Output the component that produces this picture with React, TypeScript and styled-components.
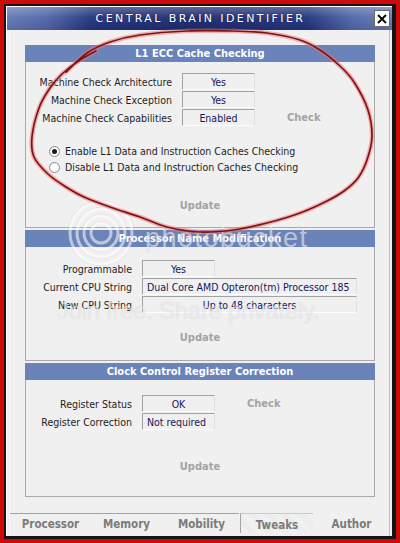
import React from "react";
import styled, { createGlobalStyle } from "styled-components";

const Global = createGlobalStyle`
  html, body { margin: 0; padding: 0; background: #cf0a0a; }
  body { font-family: "DejaVu Sans Condensed", "DejaVu Sans", sans-serif; font-stretch: condensed; }
  * { box-sizing: border-box; }
`;

const Frame = styled.div`
  width: 400px;
  height: 543px;
  background: #cf0a0a;
  padding: 4px;
  position: relative;
  overflow: hidden;
`;

const Shadow = styled.div`
  height: 100%;
  background: #141414;
  padding: 2px 4px 3px 2px;
`;

const Window = styled.div`
  height: 100%;
  display: flex;
  flex-direction: column;
  background: #f0f0f0;
  border-top: 1px solid #ffffff;
  border-left: 1px solid #ffffff;
`;

const TitleBar = styled.div`
  height: 23px;
  display: grid;
  grid-template-columns: 1fr auto 1fr;
  align-items: center;
  background:
    linear-gradient(180deg, rgba(255,255,255,0.28) 0%, rgba(255,255,255,0.05) 45%, rgba(0,0,0,0.08) 100%),
    linear-gradient(90deg, #6276b4 0%, #5165a8 10%, #22337b 22%, #1b2a70 50%, #22337b 78%, #5166a8 90%, #6378b6 100%);
`;

const TitleText = styled.div`
  grid-column: 2;
  color: #ffffff;
  font-family: "DejaVu Sans", sans-serif;
  font-stretch: normal;
  font-size: 11px;
  letter-spacing: 2.4px;
  padding-left: 2px;
  text-shadow: 0 0 2px rgba(0,0,40,0.6);
`;

const CloseButton = styled.div`
  grid-column: 3;
  justify-self: end;
  margin-right: 2px;
  width: 16px;
  height: 17px;
  background: #ffffff;
  border: 1px solid #6a6a6a;
  display: flex;
  align-items: center;
  justify-content: center;
`;

const Client = styled.div`
  flex: 1;
  display: flex;
  flex-direction: column;
  margin: 0 2px 0 2px;
  border-right: 1px solid #bdbdbd;
  border-left: 1px solid #fafafa;
`;

const Content = styled.div`
  flex: 1;
  padding: 15px 14px 0 15px;
  display: flex;
  flex-direction: column;
  gap: 2px;
`;

const Section = styled.div`
  display: flex;
  flex-direction: column;
`;

const SectionHeader = styled.div`
  height: 17px;
  background: #6a83ba;
  color: #ffffff;
  font-weight: bold;
  font-size: 11px;
  display: flex;
  align-items: center;
  justify-content: center;
`;

const Panel = styled.div<{ $h: number; $pt: number }>`
  height: ${(p) => p.$h}px;
  padding-top: ${(p) => p.$pt}px;
  border: 1px solid #a9a9a9;
  border-top: none;
  display: flex;
  flex-direction: column;
`;

const Rows = styled.div`
  display: flex;
  flex-direction: column;
  gap: 1px;
`;

const Row = styled.div<{ $label: number }>`
  display: grid;
  grid-template-columns: ${(p) => p.$label}px auto 1fr;
  column-gap: 10px;
  align-items: center;
  height: 17px;
`;

const Label = styled.div`
  text-align: right;
  font-size: 10.5px;
  color: #1e1e1e;
  white-space: nowrap;
`;

const Value = styled.div<{ $w: number; $align?: string }>`
  width: ${(p) => p.$w}px;
  height: 17px;
  border-top: 1px solid #a2a2a2;
  border-left: 1px solid #a2a2a2;
  border-right: 1px solid #e2e2e2;
  border-bottom: 1px solid #fdfdfd;
  font-size: 10.5px;
  color: #16165a;
  display: flex;
  align-items: center;
  justify-content: ${(p) => p.$align || "center"};
  padding: 0 4px;
  white-space: nowrap;
`;

const GrayButton = styled.div<{ $ml?: number }>`
  margin-left: ${(p) => p.$ml || 0}px;
  font-weight: bold;
  font-size: 11px;
  color: #a3a3a3;
  white-space: nowrap;
`;

const UpdateLine = styled.div<{ $mt: number }>`
  margin-top: ${(p) => p.$mt}px;
  height: 16px;
  display: flex;
  align-items: center;
  justify-content: center;
  font-weight: bold;
  font-size: 11px;
  color: #a3a3a3;
`;

const RadioGroup = styled.div`
  margin-top: 17px;
  padding-left: 23px;
  display: flex;
  flex-direction: column;
`;

const RadioRow = styled.div`
  height: 16px;
  display: flex;
  align-items: center;
  gap: 5px;
  font-size: 10.5px;
  color: #1e1e1e;
  white-space: nowrap;
`;

const RadioCircle = styled.span<{ $on?: boolean }>`
  width: 11px;
  height: 11px;
  border-radius: 50%;
  border: 1px solid #8c8c8c;
  background: radial-gradient(circle at 60% 60%, #ffffff 40%, #e6e6e6 100%);
  display: flex;
  align-items: center;
  justify-content: center;
  &::after {
    content: "";
    width: 5px;
    height: 5px;
    border-radius: 50%;
    background: ${(p) => (p.$on ? "#1a1a1a" : "transparent")};
  }
`;

const TabBar = styled.div`
  height: 20px;
  margin-top: 15px;
  display: grid;
  grid-template-columns: repeat(5, 1fr);
  padding-left: 4px;
  margin-bottom: 3px;
`;

const Tab = styled.div<{ $state: "before" | "active" | "after" }>`
  display: flex;
  align-items: center;
  justify-content: center;
  font-weight: bold;
  font-size: 11.5px;
  color: #7b7b7b;
  border-top: 1px solid ${(p) => (p.$state === "before" ? "#a4a4a4" : p.$state === "active" ? "#c8c8c8" : "transparent")};
  border-left: ${(p) => (p.$state === "active" ? "1px solid #a4a4a4" : "none")};
  padding-top: ${(p) => (p.$state === "active" ? "2px" : "0")};
  background: ${(p) =>
    p.$state === "active"
      ? "repeating-linear-gradient(45deg, #f4f4f4 0 1px, #e9e9e9 1px 2px)"
      : "transparent"};
  margin-left: ${(p) => (p.$state === "active" ? "1px" : "0")};
  margin-right: ${(p) => (p.$state === "active" ? "1px" : "0")};
`;

const FirstTab = styled(Tab)`
  margin-left: -4px;
  padding-left: 2px;
`;

const Overlay = styled.svg`
  position: absolute;
  left: 0;
  top: 0;
  pointer-events: none;
`;

const Watermark = styled.div`
  position: absolute;
  left: 55px;
  top: 200px;
  pointer-events: none;
  display: grid;
  grid-template-columns: 92px auto;
  align-items: start;
  font-family: "Liberation Sans", sans-serif;
  font-stretch: normal;
  white-space: nowrap;
  color: rgba(255, 255, 255, 0.5);
  text-shadow: 0 0 1px rgba(150, 150, 150, 0.35);
`;

const WmBig = styled.div`
  font-size: 27px;
  letter-spacing: 1.5px;
  margin-top: 23px;
  margin-left: -2px;
`;

const WmSub = styled.div`
  grid-column: 1 / span 2;
  font-size: 24px;
  margin-top: 30px;
  padding-left: 2px;
  letter-spacing: -0.3px;
`;

function catmull(points: [number, number][]) {
  let d = `M${points[0][0]},${points[0][1]}`;
  for (let i = 0; i < points.length - 1; i++) {
    const p0 = points[i - 1] || points[i];
    const p1 = points[i];
    const p2 = points[i + 1];
    const p3 = points[i + 2] || p2;
    const c1x = p1[0] + (p2[0] - p0[0]) / 6;
    const c1y = p1[1] + (p2[1] - p0[1]) / 6;
    const c2x = p2[0] - (p3[0] - p1[0]) / 6;
    const c2y = p2[1] - (p3[1] - p1[1]) / 6;
    d += ` C${c1x.toFixed(1)},${c1y.toFixed(1)} ${c2x.toFixed(1)},${c2y.toFixed(1)} ${p2[0]},${p2[1]}`;
  }
  return d;
}

const ellipsePts: [number, number][] = [
  [66, 72], [87, 53], [110, 42], [140, 35], [187, 31], [233, 31], [267, 33], [300, 40], [320, 50],
  [340, 66], [354, 82], [368, 110], [372, 137], [367, 160], [358, 178], [344, 191], [327, 201],
  [300, 213], [267, 223], [233, 230], [200, 232], [167, 227], [140, 217], [110, 207], [84, 197],
  [66, 187], [48, 174], [34, 157], [32, 137], [39, 108], [50, 88], [62, 74], [80, 60], [96, 51],
];

const Ring = () => (
  <svg width="92" height="67" viewBox="0 0 92 67">
    {[31, 24, 17, 10].map((r) => (
      <circle key={r} cx="46" cy="33" r={r} fill="none" stroke="rgba(255,255,255,0.55)" strokeWidth="3" />
    ))}
    {[31, 24, 17, 10].map((r) => (
      <circle key={"s" + r} cx="46" cy="33" r={r + 1.8} fill="none" stroke="rgba(160,160,160,0.18)" strokeWidth="0.8" />
    ))}
  </svg>
);

export default function App() {
  const path = catmull(ellipsePts);
  return (
    <>
      <Global />
      <Frame>
        <Shadow>
          <Window>
            <TitleBar>
              <TitleText>CENTRAL BRAIN IDENTIFIER</TitleText>
              <CloseButton>
                <svg width="10" height="10" viewBox="0 0 10 10">
                  <path d="M1 1 L9 9 M9 1 L1 9" stroke="#000" strokeWidth="1.8" />
                </svg>
              </CloseButton>
            </TitleBar>
            <Client>
              <Content>
                <Section>
                  <SectionHeader>L1 ECC Cache Checking</SectionHeader>
                  <Panel $h={166} $pt={11}>
                    <Rows>
                      <Row $label={146}>
                        <Label>Machine Check Architecture</Label>
                        <Value $w={73}>Yes</Value>
                      </Row>
                      <Row $label={146}>
                        <Label>Machine Check Exception</Label>
                        <Value $w={73}>Yes</Value>
                      </Row>
                      <Row $label={146}>
                        <Label>Machine Check Capabilities</Label>
                        <Value $w={73}>Enabled</Value>
                        <GrayButton $ml={22}>Check</GrayButton>
                      </Row>
                    </Rows>
                    <RadioGroup>
                      <RadioRow>
                        <RadioCircle $on />
                        Enable L1 Data and Instruction Caches Checking
                      </RadioRow>
                      <RadioRow>
                        <RadioCircle />
                        Disable L1 Data and Instruction Caches Checking
                      </RadioRow>
                    </RadioGroup>
                    <UpdateLine $mt={22}>Update</UpdateLine>
                  </Panel>
                </Section>
                <Section>
                  <SectionHeader>Processor Name Modification</SectionHeader>
                  <Panel $h={114} $pt={13}>
                    <Rows>
                      <Row $label={106}>
                        <Label>Programmable</Label>
                        <Value $w={73}>Yes</Value>
                      </Row>
                      <Row $label={106}>
                        <Label>Current CPU String</Label>
                        <Value $w={215} $align="flex-start">Dual Core AMD Opteron(tm) Processor 185</Value>
                      </Row>
                      <Row $label={106}>
                        <Label>New CPU String</Label>
                        <Value $w={215}>Up to 48 characters</Value>
                      </Row>
                    </Rows>
                    <UpdateLine $mt={16}>Update</UpdateLine>
                  </Panel>
                </Section>
                <Section>
                  <SectionHeader>Clock Control Register Correction</SectionHeader>
                  <Panel $h={117} $pt={15}>
                    <Rows>
                      <Row $label={106}>
                        <Label>Register Status</Label>
                        <Value $w={73}>OK</Value>
                        <GrayButton $ml={22}>Check</GrayButton>
                      </Row>
                      <Row $label={106}>
                        <Label>Register Correction</Label>
                        <Value $w={73} $align="flex-start">Not required</Value>
                      </Row>
                    </Rows>
                    <UpdateLine $mt={28}>Update</UpdateLine>
                  </Panel>
                </Section>
              </Content>
              <TabBar>
                <FirstTab $state="before">Processor</FirstTab>
                <Tab $state="before">Memory</Tab>
                <Tab $state="before">Mobility</Tab>
                <Tab $state="active">Tweaks</Tab>
                <Tab $state="after">Author</Tab>
              </TabBar>
            </Client>
          </Window>
        </Shadow>
        <Watermark>
          <Ring />
          <WmBig>photobucket</WmBig>
          <WmSub>Join free. Share privately.</WmSub>
        </Watermark>
        <Overlay width="400" height="543" viewBox="0 0 400 543">
          <path d={path} fill="none" stroke="rgba(240,120,120,0.55)" strokeWidth="4.5" strokeLinecap="round" />
          <path d={path} fill="none" stroke="#7d1414" strokeWidth="1.7" strokeLinecap="round" />
        </Overlay>
      </Frame>
    </>
  );
}
